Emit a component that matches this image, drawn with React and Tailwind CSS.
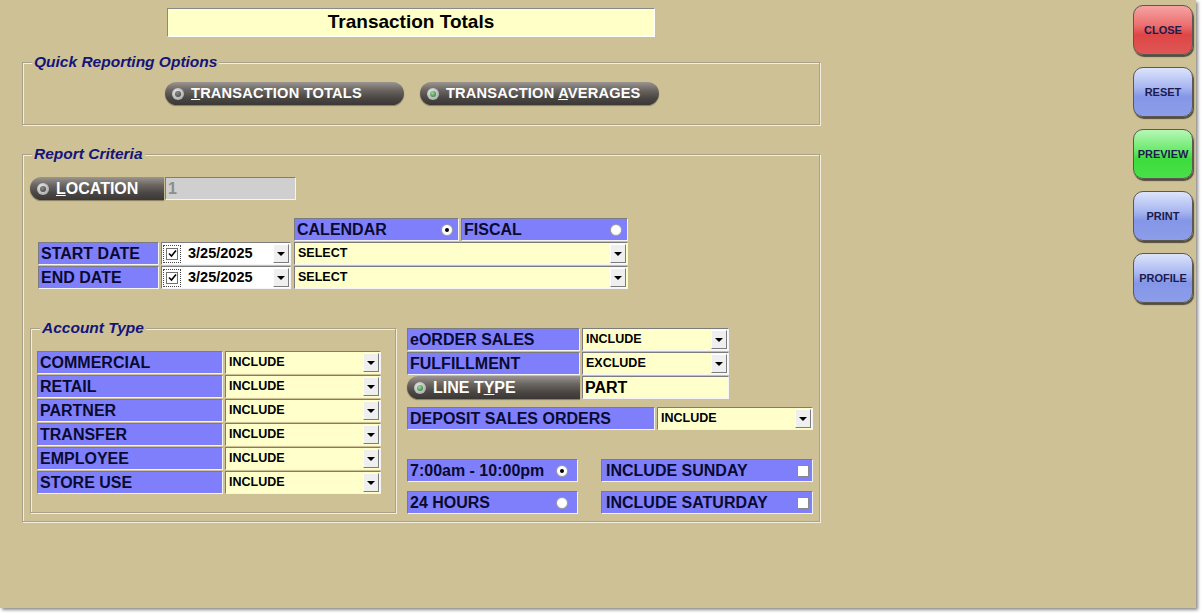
import React from "react";

const SUNKEN =
  "border border-t-[#7c7c7c] border-l-[#7c7c7c] border-b-[#f4f4f4] border-r-[#f4f4f4]";

function Arrow() {
  return (
    <div className="ml-auto mr-[1px] flex h-[19px] w-[16px] shrink-0 items-center justify-center border border-t-white border-l-white border-b-[#7c7c7c] border-r-[#7c7c7c] bg-[#efefef]">
      <div className="h-0 w-0 border-l-[4px] border-r-[4px] border-t-[4px] border-l-transparent border-r-transparent border-t-black" />
    </div>
  );
}

function Dropdown({ value, className = "" }) {
  return (
    <div className={"flex h-full items-center bg-[#ffffcc] " + SUNKEN + " " + className}>
      <span className="pl-[3px] text-[12.5px] font-bold text-black">{value}</span>
      <Arrow />
    </div>
  );
}

function Label({ children, className = "" }) {
  return (
    <div className={"flex h-full items-center bg-[#7f7ffc] pl-[2px] text-[16px] font-bold text-[#0a0a30] " + SUNKEN + " " + className}>
      {children}
    </div>
  );
}

function Dot({ green }) {
  return (
    <div className="flex h-[12px] w-[12px] shrink-0 items-center justify-center rounded-full bg-[radial-gradient(circle_at_40%_35%,#e8e8e8,#9a9a9a)]">
      <div
        className={
          green
            ? "h-[6px] w-[6px] rounded-full bg-[radial-gradient(circle_at_40%_35%,#9ae09a,#1f6a2a)]"
            : "h-[6px] w-[6px] rounded-full bg-[radial-gradient(circle_at_40%_35%,#8a8a8a,#3a3a3a)]"
        }
      />
    </div>
  );
}

function Pill({ children, green, className = "" }) {
  return (
    <div
      className={
        "flex h-[23px] items-center gap-[7px] bg-[linear-gradient(to_bottom,#9a958f_0%,#6b6662_35%,#4a4643_70%,#3a3734_100%)] pl-[7px] text-white font-bold shadow-[0_1px_1px_rgba(0,0,0,0.35)] " +
        className
      }
    >
      <Dot green={green} />
      {children}
    </div>
  );
}

function Radio({ checked }) {
  return (
    <div className="flex h-[12px] w-[12px] shrink-0 items-center justify-center rounded-full border border-[#9a9a9a] bg-white">
      {checked && <div className="h-[4px] w-[4px] rounded-full bg-black" />}
    </div>
  );
}

function Check() {
  return <div className="h-[12px] w-[12px] shrink-0 border border-[#8a8a8a] bg-white" />;
}

function Group({ legend, className = "", children }) {
  return (
    <div
      className={
        "relative border border-[#a9a28a] shadow-[inset_1px_1px_0_#f3efdf,1px_1px_0_#f3efdf] " + className
      }
    >
      <span className="absolute -top-[10px] left-[9px] bg-[#cec196] px-[2px] text-[15.5px] font-bold italic leading-[18px] text-[#14147a]">
        {legend}
      </span>
      {children}
    </div>
  );
}

function DateBox() {
  return (
    <div className={"flex h-full w-[130px] items-center bg-white " + SUNKEN}>
      <div className="ml-[1px] border border-dotted border-[#444] px-[2px] py-[2px]">
        <div className="flex h-[12px] w-[12px] items-center justify-center border border-[#707070] bg-white">
          <svg width="9" height="9" viewBox="0 0 9 9">
            <path d="M1 4.5 L3.5 7 L8 1.5" stroke="#000" strokeWidth="1.6" fill="none" />
          </svg>
        </div>
      </div>
      <span className="ml-[7px] text-[14.5px] font-bold text-black">3/25/2025</span>
      <Arrow />
    </div>
  );
}

function SideButton({ label, color }) {
  const styles = {
    red: "bg-[linear-gradient(to_bottom,#f6a3a3_0%,#ec7070_40%,#dd4646_60%,#e05656_100%)]",
    blue: "bg-[linear-gradient(to_bottom,#dce4fb_0%,#a9b7f1_40%,#8496e6_60%,#8c9ee9_100%)]",
    green: "bg-[linear-gradient(to_bottom,#b7f7b7_0%,#6fea6f_40%,#3ddc3d_60%,#48e048_100%)]",
  };
  return (
    <div
      className={
        "flex h-[50px] w-[60px] items-center justify-center rounded-[10px] border border-[#5a5850] shadow-[1px_2px_1px_rgba(0,0,0,0.6)] " +
        styles[color]
      }
    >
      <span className="text-[11px] font-bold text-[#1b1b4e]">{label}</span>
    </div>
  );
}

const ACCOUNTS = ["COMMERCIAL", "RETAIL", "PARTNER", "TRANSFER", "EMPLOYEE", "STORE USE"];

export default function App() {
  return (
    <div className="h-[614px] w-[1202px] bg-white font-['Liberation_Sans',Arial,sans-serif]">
      <div className="flex h-[608px] w-[1196px] bg-[#cec196] pl-[22px] shadow-[2px_2px_3px_rgba(0,0,0,0.45)]">
        {/* main column */}
        <div className="flex w-[798px] flex-col">
          <div className="ml-[145px] mt-[8px] flex h-[29px] w-[488px] items-center justify-center border border-t-[#8a8a8a] border-l-[#8a8a8a] border-b-white border-r-white bg-[#ffffc8]">
            <span className="text-[19px] font-bold text-black">Transaction Totals</span>
          </div>

          <Group legend="Quick Reporting Options" className="mt-[25px] h-[63px]">
            <div className="flex gap-[16px] pl-[142px] pt-[19px]">
              <Pill className="w-[239px] rounded-full text-[14.6px] tracking-[0.2px]">
                <span>
                  <span className="underline">T</span>RANSACTION TOTALS
                </span>
              </Pill>
              <Pill green className="w-[239px] rounded-full text-[14.6px] tracking-[0.2px]">
                <span>
                  TRANSACTION <span className="underline">A</span>VERAGES
                </span>
              </Pill>
            </div>
          </Group>

          <Group legend="Report Criteria" className="mt-[29px] h-[368px]">
            <div className="flex flex-col pl-[7px] pt-[22px]">
              {/* location */}
              <div className="flex h-[23px]">
                <Pill className="w-[134px] rounded-l-full text-[16px]">
                  <span>
                    <span className="underline">L</span>OCATION
                  </span>
                </Pill>
                <div className={"ml-[1px] flex h-full w-[131px] items-center bg-[#cfcfcf] pl-[2px] " + SUNKEN}>
                  <span className="text-[16px] font-bold text-[#8c8c8c]">1</span>
                </div>
              </div>

              {/* calendar / fiscal */}
              <div className="ml-[264px] mt-[18px] flex h-[23px] gap-[2px]">
                <Label className="w-[165px] pr-[5px]">
                  <span>CALENDAR</span>
                  <span className="ml-auto">
                    <Radio checked />
                  </span>
                </Label>
                <Label className="w-[167px] pr-[5px]">
                  <span>FISCAL</span>
                  <span className="ml-auto">
                    <Radio />
                  </span>
                </Label>
              </div>

              <div className="ml-[8px] mt-[1px] flex h-[23px]">
                <Label className="w-[121px]">START DATE</Label>
                <div className="ml-[2px] h-full">
                  <DateBox />
                </div>
                <Dropdown value="SELECT" className="ml-[3px] w-[334px]" />
              </div>
              <div className="ml-[8px] mt-[1px] flex h-[23px]">
                <Label className="w-[121px]">END DATE</Label>
                <div className="ml-[2px] h-full">
                  <DateBox />
                </div>
                <Dropdown value="SELECT" className="ml-[3px] w-[334px]" />
              </div>

              {/* lower area */}
              <div className="mt-[39px] flex">
                <Group legend="Account Type" className="h-[185px] w-[366px]">
                  <div className="flex flex-col gap-[1px] pl-[6px] pt-[22px]">
                    {ACCOUNTS.map((a) => (
                      <div key={a} className="flex h-[23px]">
                        <Label className="w-[186px]">{a}</Label>
                        <Dropdown value="INCLUDE" className="ml-[2px] w-[156px]" />
                      </div>
                    ))}
                  </div>
                </Group>

                <div className="ml-[11px] flex flex-col">
                  <div className="flex h-[23px]">
                    <Label className="w-[173px]">eORDER SALES</Label>
                    <Dropdown value="INCLUDE" className="ml-[2px] w-[147px]" />
                  </div>
                  <div className="mt-[1px] flex h-[23px]">
                    <Label className="w-[173px]">FULFILLMENT</Label>
                    <Dropdown value="EXCLUDE" className="ml-[2px] w-[147px]" />
                  </div>
                  <div className="mt-[1px] flex h-[23px]">
                    <Pill green className="w-[173px] rounded-l-full text-[16px]">
                      <span>
                        LINE T<span className="underline">Y</span>PE
                      </span>
                    </Pill>
                    <div className={"ml-[2px] flex h-full w-[147px] items-center bg-[#ffffcc] pl-[2px] " + SUNKEN}>
                      <span className="text-[16px] font-bold text-black">PART</span>
                    </div>
                  </div>

                  <div className="mt-[8px] flex h-[23px]">
                    <Label className="w-[248px]">DEPOSIT SALES ORDERS</Label>
                    <Dropdown value="INCLUDE" className="ml-[2px] w-[156px]" />
                  </div>

                  <div className="mt-[29px] flex h-[23px]">
                    <Label className="w-[171px] pr-[9px]">
                      <span>7:00am - 10:00pm</span>
                      <span className="ml-auto">
                        <Radio checked />
                      </span>
                    </Label>
                    <Label className="ml-[23px] w-[212px] pl-[4px] pr-[3px]">
                      <span>INCLUDE SUNDAY</span>
                      <span className="ml-auto">
                        <Check />
                      </span>
                    </Label>
                  </div>
                  <div className="mt-[9px] flex h-[23px]">
                    <Label className="w-[171px] pr-[9px]">
                      <span>24 HOURS</span>
                      <span className="ml-auto">
                        <Radio />
                      </span>
                    </Label>
                    <Label className="ml-[23px] w-[212px] pl-[4px] pr-[3px]">
                      <span>INCLUDE SATURDAY</span>
                      <span className="ml-auto">
                        <Check />
                      </span>
                    </Label>
                  </div>
                </div>
              </div>
            </div>
          </Group>
        </div>

        {/* side buttons */}
        <div className="ml-auto mr-[3px] mt-[5px] flex flex-col gap-[12px]">
          <SideButton label="CLOSE" color="red" />
          <SideButton label="RESET" color="blue" />
          <SideButton label="PREVIEW" color="green" />
          <SideButton label="PRINT" color="blue" />
          <SideButton label="PROFILE" color="blue" />
        </div>
      </div>
    </div>
  );
}
